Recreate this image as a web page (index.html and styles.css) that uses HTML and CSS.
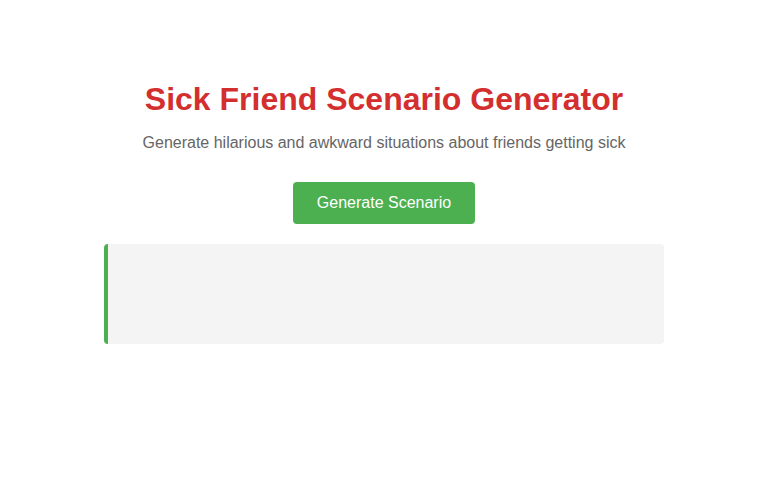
FILE: index.html
```html
<!DOCTYPE html>
<html lang="en">
<head>
<meta charset="utf-8">
<title>Sick Friend Scenario Generator</title>
<link rel="stylesheet" href="styles.css">
</head>
<body>
<main class="app">
  <h1 class="title">Sick Friend Scenario Generator</h1>
  <p class="subtitle">Generate hilarious and awkward situations about friends getting sick</p>
  <button class="generate-btn" type="button">Generate Scenario</button>
  <div class="scenario"></div>
</main>
</body>
</html>
```
FILE: styles.css
```css
html, body {
  margin: 0;
  padding: 0;
  background: #ffffff;
}

body {
  font-family: "Liberation Sans", Arial, sans-serif;
}

.app {
  display: flex;
  flex-direction: column;
  align-items: center;
  padding-top: 81px;
}

.title {
  margin: 0;
  font-size: 32px;
  line-height: 37px;
  font-weight: bold;
  color: #d32f2f;
}

.subtitle {
  margin: 16px 0 0;
  font-size: 16px;
  line-height: 18px;
  color: #666666;
}

.generate-btn {
  margin-top: 30px;
  padding: 12px 24px;
  font-family: inherit;
  font-size: 16px;
  line-height: 18px;
  color: #ffffff;
  background: #4caf50;
  border: none;
  border-radius: 4px;
  cursor: pointer;
}

.scenario {
  box-sizing: border-box;
  margin-top: 20px;
  width: 560px;
  height: 100px;
  background: #f4f4f4;
  border-left: 4px solid #4caf50;
  border-radius: 4px;
}
```
